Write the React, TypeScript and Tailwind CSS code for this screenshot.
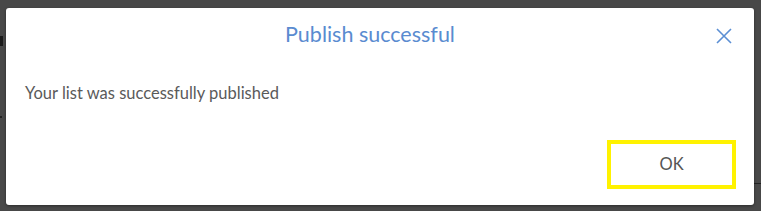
import React from "react";

export default function App() {
  return (
    <div
      className="w-[761px] h-[211px] bg-[#484848] relative overflow-hidden"
      style={{ fontFamily: "Lato, 'Liberation Sans', sans-serif" }}
    >
      <div className="absolute left-0 top-[36px] w-[3px] h-[10px] bg-[#1a1a1a]" />
      <div className="absolute left-0 top-[116px] w-[2px] h-[2px] bg-[#222]" />
      <div className="absolute left-[754px] top-[172px] w-[7px] h-[12px] border-b border-[#222]" />
      <div className="absolute left-[6px] top-[8px] w-[748px] h-[197px] bg-white rounded-[3px] shadow-[0_1px_3px_rgba(0,0,0,0.4)] flex flex-col">
        <div className="h-[56px] flex items-center pl-[20px] pr-[22px] gap-[2px]">
          <div className="flex-1 text-center text-[21.5px] text-[#5a8bd0] leading-none mb-[3px]">Publish successful</div>
          <button className="w-[16px] h-[16px] flex items-center justify-center text-[#5b8fd4]">
            <svg width="16" height="16" viewBox="0 0 16 16" fill="none" stroke="currentColor" strokeWidth="1.6">
              <path d="M1 1 L15 15 M15 1 L1 15" />
            </svg>
          </button>
        </div>
        <div className="pl-[19px] pt-[19px] text-[16.5px] leading-[20px] text-[#5a5a5a]">
          Your list was successfully published
        </div>
        <div className="mt-auto flex justify-end pr-[18px] pb-[16px]">
          <button className="w-[129px] h-[49px] border-[4px] border-[#fff200] bg-white text-[16.5px] text-[#555] flex items-center justify-center">
            OK
          </button>
        </div>
      </div>
    </div>
  );
}
